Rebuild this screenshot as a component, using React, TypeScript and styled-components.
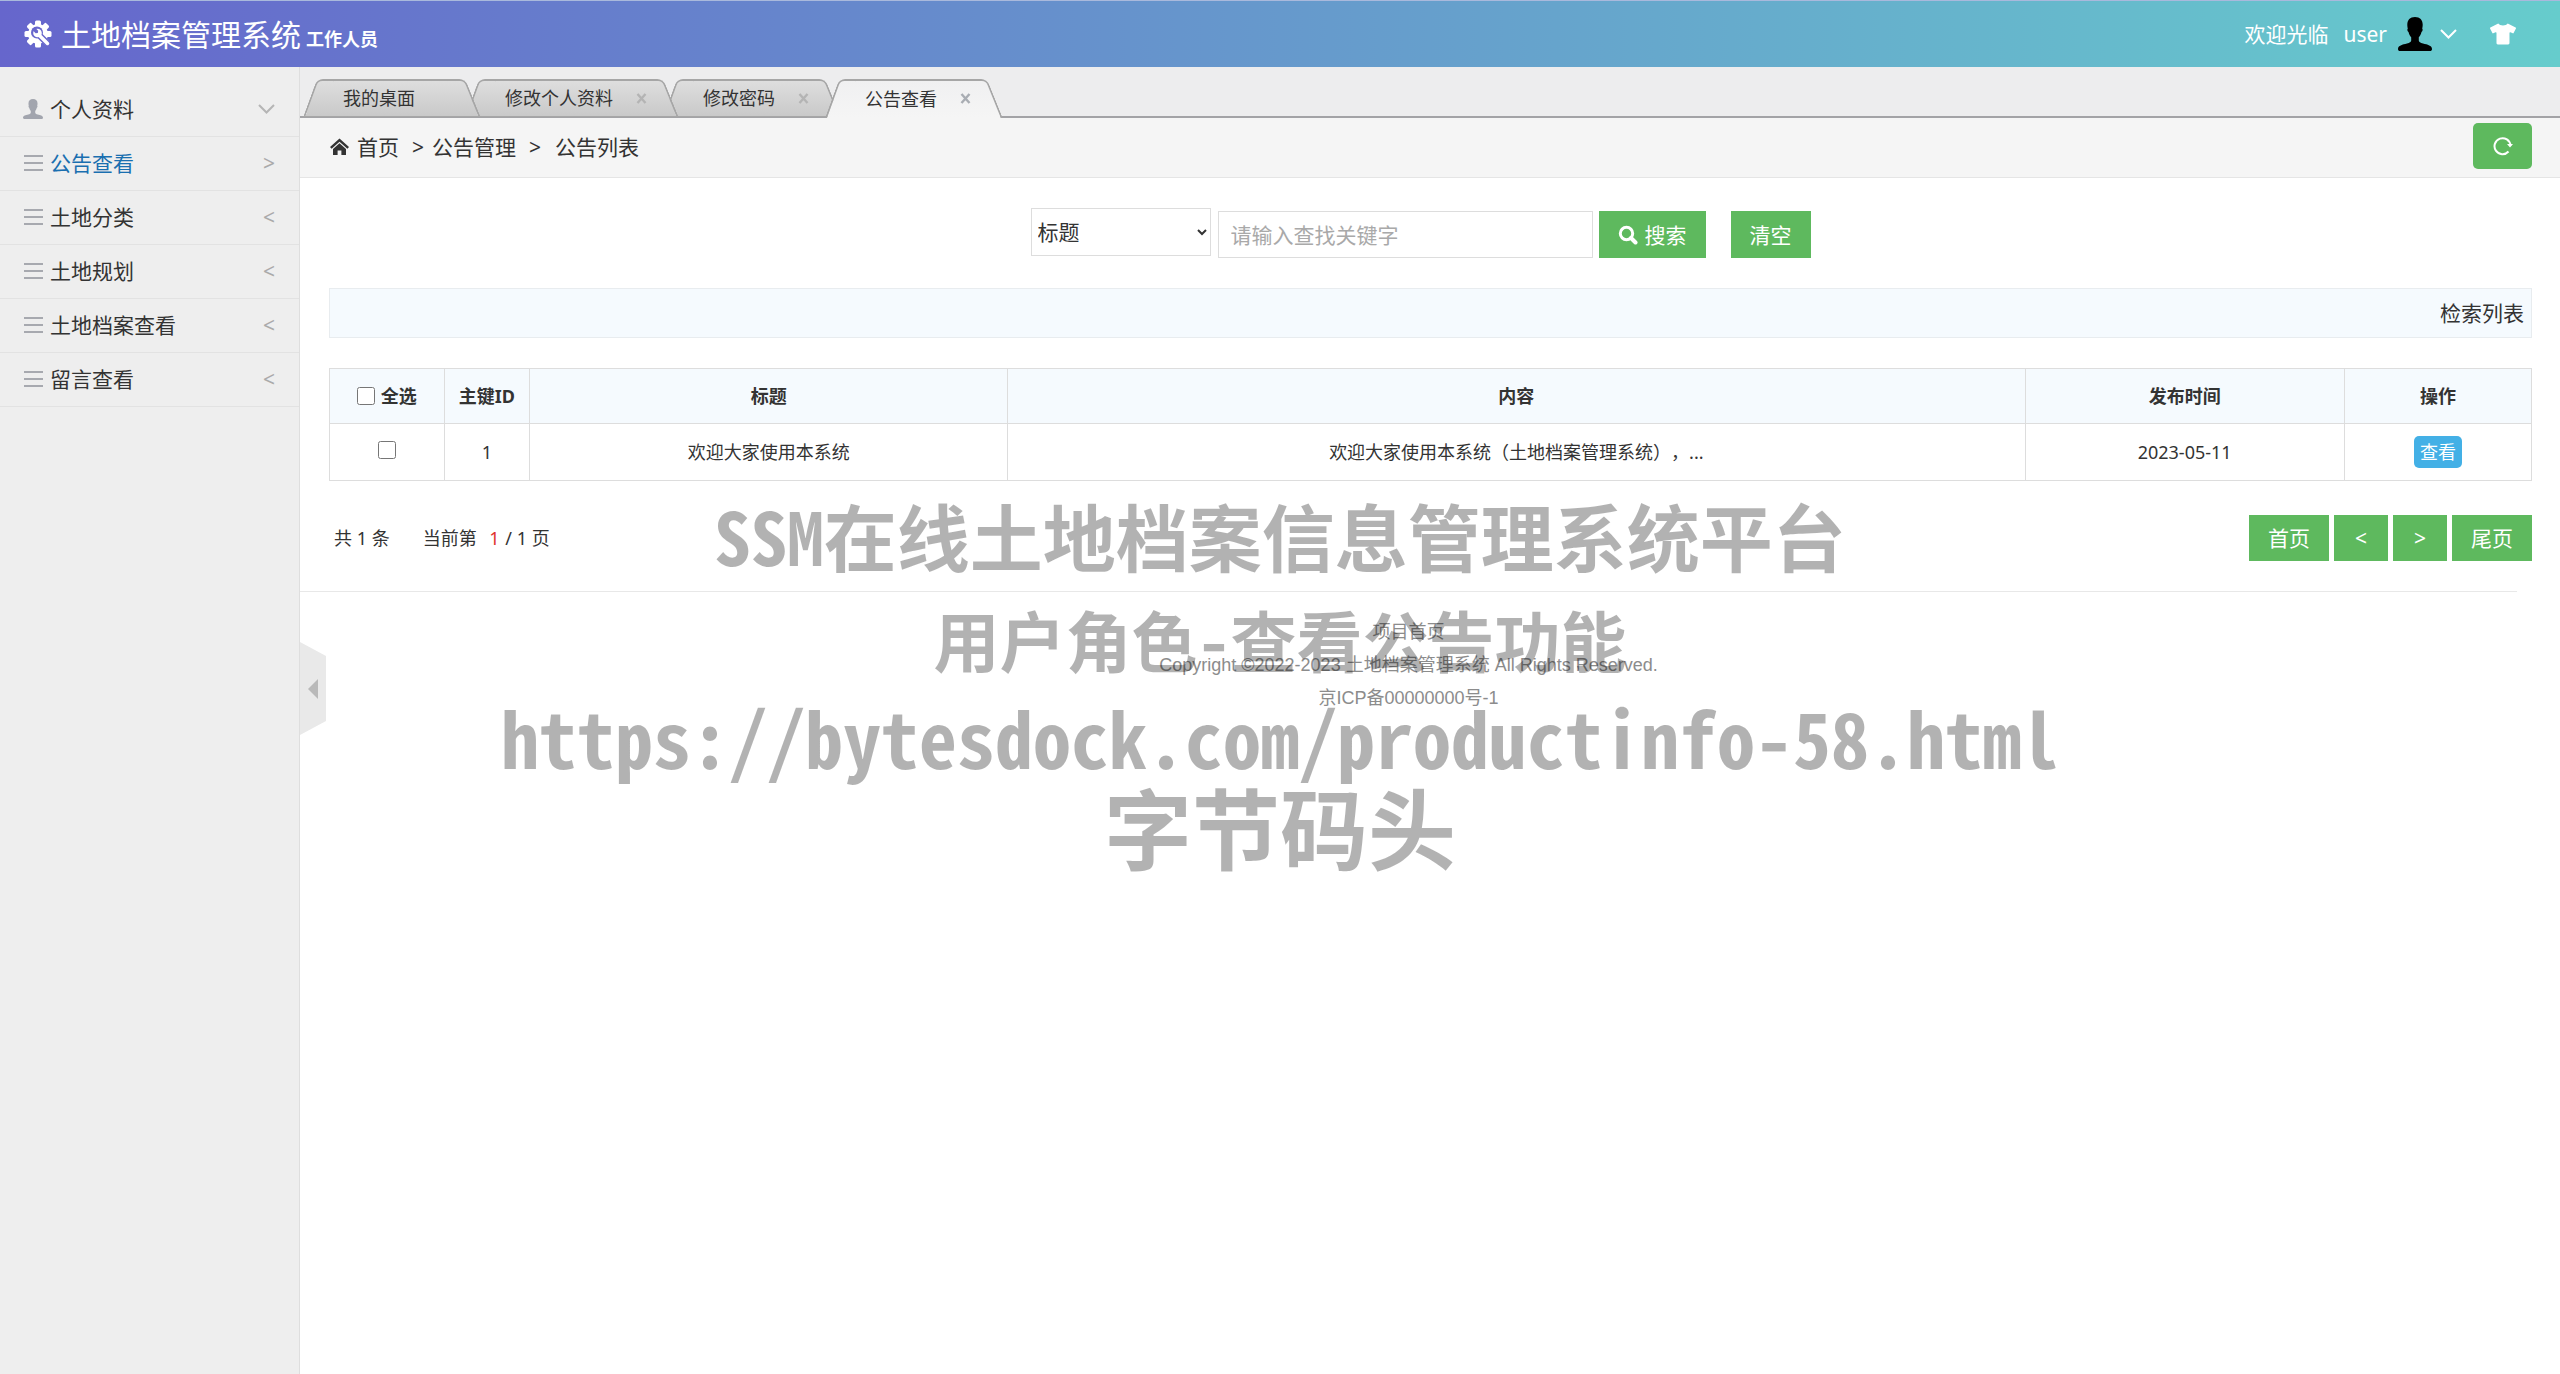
import React, { useState } from "react";
import styled, { createGlobalStyle } from "styled-components";
import { FaTshirt } from "react-icons/fa";

const GREEN = "#5eb95e";
const LINE = "#dddddd";

const GlobalStyle = createGlobalStyle`
  *, *::before, *::after { box-sizing: border-box; }
  body {
    margin: 0;
    background: #fff;
    color: #333;
    font-family: "Noto Sans", "Noto Sans CJK SC", sans-serif;
    font-size: 21px;
    line-height: 30px;
    text-spacing-trim: space-all;
  }
  a { color: inherit; text-decoration: none; }
  button, input, select { font: inherit; color: inherit; }
  button { border: 0; padding: 0; background: none; cursor: pointer; }
  svg { display: block; flex: none; }
`;

const Page = styled.div`
  position: relative;
  min-height: 100vh;
  display: flex;
  flex-direction: column;
`;

/* header */

const Header = styled.header`
  height: 67px;
  padding: 0 44px 0 24px;
  display: flex;
  align-items: center;
  justify-content: space-between;
  color: #fff;
  border-top: 1px solid #a9b9dc;
  background: linear-gradient(to right, #6666cc, #66cccc);
`;

const Brand = styled.a`
  display: flex;
  align-items: center;
  gap: 9px;
`;

const BrandText = styled.span`
  padding-top: 6px;
  display: flex;
  align-items: baseline;
  gap: 5px;
  font-size: 30px;
  line-height: 44px;
`;

const Role = styled.strong`
  font-size: 18px;
`;

const Account = styled.div`
  display: flex;
  align-items: center;
  gap: 33px;
`;

const UserButton = styled.button`
  display: flex;
  align-items: center;
  gap: 8px;
`;

const UserName = styled.span`
  margin: 0 3px 0 7px;
`;

/* body frame */

const Body = styled.div`
  flex: 1;
  display: flex;
`;

const Sidebar = styled.nav`
  width: 300px;
  flex: none;
  padding-top: 16px;
  background: #eeeeee;
  border-right: 1px solid #dedede;
`;

const Menu = styled.ul`
  margin: 0;
  padding: 0;
  list-style: none;
`;

const MenuLink = styled.a<{ $active?: boolean }>`
  height: 54px;
  padding: 0 24px 2px 23px;
  display: flex;
  align-items: center;
  gap: 7px;
  border-bottom: 1px solid #e2e2e2;
  color: ${(p) => (p.$active ? "#1a6fb0" : "#333")};
`;

const MenuMark = styled.span`
  margin-left: auto;
  color: #aaa;
`;

const Content = styled.div`
  position: relative;
  flex: 1;
  min-width: 0;
`;

const Handle = styled.button`
  position: absolute;
  left: 0;
  top: 575px;
  width: 26px;
  height: 93px;
  display: flex;
  align-items: center;
  justify-content: center;
  background: #e9e9e9;
  clip-path: polygon(0 0, 100% 14px, 100% 79px, 0 100%);
`;

/* tabs */

const TabBar = styled.div`
  height: 51px;
  padding: 12px 0 0 10px;
  display: flex;
  background: #ededee;
  border-bottom: 2px solid #a3a3a6;
`;

const Tab = styled.div<{ $active?: boolean; $layer: number }>`
  position: relative;
  z-index: ${(p) => p.$layer};
  height: ${(p) => (p.$active ? 39 : 38)}px;
  padding: 0 23px 0 33px;
  display: flex;
  align-items: center;
  gap: 23px;
  font-size: 18px;

  &::before,
  &::after {
    content: "";
    position: absolute;
    z-index: -1;
    top: 0;
    bottom: 0;
    border: 2px solid #a6a6a6;
    border-bottom-width: ${(p) => (p.$active ? 0 : 1)}px;
    background: ${(p) =>
      p.$active
        ? "linear-gradient(#f0f0f1, #f5f5f5)"
        : "linear-gradient(#dedede, #c9c9c9)"};
  }
  &::before {
    left: 0;
    right: 30px;
    border-right: 0;
    border-top-left-radius: 6px;
    transform: skewX(-20deg);
  }
  &::after {
    right: -1px;
    left: 30px;
    border-left: 0;
    border-top-right-radius: 6px;
    transform: skewX(22deg);
  }
`;

const TabClose = styled.button<{ $hidden?: boolean; $active?: boolean }>`
  width: 11px;
  color: ${(p) => (p.$active ? "#a9adb3" : "#b4b4b4")};
  visibility: ${(p) => (p.$hidden ? "hidden" : "visible")};
`;

/* breadcrumb */

const Crumbs = styled.div`
  height: 60px;
  padding: 0 28px 2px;
  display: flex;
  align-items: center;
  justify-content: space-between;
  background: #f5f5f5;
  border-bottom: 1px solid #e5e5e5;
`;

const CrumbPath = styled.nav`
  display: flex;
  align-items: center;
  gap: 8px;
  padding-left: 2px;
`;

const CrumbArrow = styled.span<{ $wide?: boolean }>`
  margin-left: 5px;
  margin-right: ${(p) => (p.$wide ? 6 : 0)}px;
`;

const Refresh = styled.button`
  width: 59px;
  height: 46px;
  margin-bottom: 2px;
  display: grid;
  place-items: center;
  border-radius: 5px;
  background: ${GREEN};
`;

/* search and list */

const Main = styled.main`
  padding: 30px 28px 30px 29px;
`;

const SearchForm = styled.form`
  display: flex;
  justify-content: center;
  align-items: flex-end;
  padding-right: 20px;
  margin-bottom: 30px;
`;

const Field = styled.select`
  width: 180px;
  height: 48px;
  margin: 0 7px 2px 0;
  padding: 0 2px;
  border: 1px solid ${LINE};
  background: #fff;
`;

const Keyword = styled.input`
  width: 375px;
  height: 47px;
  margin-right: 6px;
  padding: 0 12px;
  border: 1px solid ${LINE};
  &::placeholder { color: #a9a9a9; opacity: 1; }
`;

const GreenButton = styled.button`
  height: 47px;
  padding: 0 19px;
  display: flex;
  align-items: center;
  gap: 7px;
  background: ${GREEN};
  color: #fff;
`;

const ClearButton = styled(GreenButton)`
  margin-left: 25px;
`;

const ListBar = styled.div`
  height: 50px;
  margin-bottom: 30px;
  padding: 0 7px;
  display: flex;
  align-items: center;
  justify-content: flex-end;
  background: #f5fafe;
  border: 1px solid #e8ecef;
`;

const Table = styled.table`
  width: 100%;
  table-layout: fixed;
  border-collapse: collapse;
  font-size: 18px;
  line-height: 30px;
  text-align: center;
  background: #fff;
`;

const Col = styled.col<{ $share: number }>`
  width: ${(p) => p.$share}%;
`;

const Th = styled.th`
  height: 55px;
  padding: 0;
  border: 1px solid ${LINE};
  background: #f5fafe;
`;

const Td = styled.td`
  height: 57px;
  padding: 0;
  border: 1px solid ${LINE};
`;

const Check = styled.input`
  width: 18px;
  height: 18px;
  margin: 0;
`;

const CheckLabel = styled.label`
  display: flex;
  align-items: center;
  justify-content: center;
  gap: 6px;
`;

const ViewButton = styled.button`
  height: 32px;
  padding: 0 6px;
  border-radius: 5px;
  background: #43b0e6;
  color: #fff;
`;

const Pager = styled.div`
  margin-top: 34px;
  display: flex;
  align-items: center;
  justify-content: space-between;
  font-size: 18px;
`;

const PagerInfo = styled.p`
  margin: 0;
  padding-left: 5px;
  display: flex;
  gap: 33px;
`;

const Current = styled.em`
  margin: 0 1px 0 8px;
  font-style: normal;
  color: #e0332e;
`;

const PagerButtons = styled.div`
  display: flex;
  gap: 5px;
  font-size: 21px;
`;

const PagerButton = styled(GreenButton)<{ $narrow?: boolean }>`
  height: 46px;
  padding: 0;
  width: ${(p) => (p.$narrow ? 54 : 80)}px;
  justify-content: center;
`;

const Footer = styled.footer`
  margin-right: 43px;
  padding-top: 24px;
  border-top: 1px solid #e8e8e8;
  text-align: center;
  font-family: "Liberation Sans", "Noto Sans CJK SC", sans-serif;
  font-size: 18px;
  line-height: 33px;
  color: #8c8c8c;
`;

const FooterLine = styled.p`
  margin: 0;
`;

/* watermark laid over the page */

const Watermark = styled.div`
  position: absolute;
  top: 480px;
  left: 0;
  right: 0;
  pointer-events: none;
  text-align: center;
  white-space: nowrap;
  font-family: "Noto Sans CJK SC", sans-serif;
  font-feature-settings: "hwid";
  font-weight: 700;
  color: rgba(0, 0, 0, 0.3);
`;

const MarkLine = styled.div<{ $size: number; $height: number }>`
  font-size: ${(p) => p.$size}px;
  line-height: ${(p) => p.$height}px;
`;

/* icons */

const GearIcon = () => (
  <svg width="28" height="28" viewBox="0 0 28 28" fill="none">
    {[0, 45, 90, 135, 180, 225, 270, 315].map((a) => (
      <rect key={a} x="11" y="0.5" width="6" height="7" rx="1.5" fill="#fff" transform={`rotate(${a} 14 14)`} />
    ))}
    <circle cx="14" cy="14" r="10" fill="#fff" />
    <circle cx="13" cy="12.5" r="6" fill="#6867cc" />
    <path d="M14 14l9 9" stroke="#6867cc" strokeWidth="6.5" strokeLinecap="round" />
    <circle cx="13.5" cy="13" r="4.3" fill="#fff" />
    <path d="M14 14l9.500 9.500" stroke="#fff" strokeWidth="3.500" strokeLinecap="round" />
    <path d="M8 9.500l2.500-2.500 3.700 3.700-.4 2.200-2.200.4z" fill="#6867cc" />
  </svg>
);

const BustIcon = ({ size, color }: { size: number; color: string }) => (
  <svg width={size} height={size} viewBox="0 0 34 34" fill={color}>
    <path d="M17 0c5 0 7.700 3 7.700 7.500 0 1.800-.2 3-.5 4 .8.600.5 2.700-.7 3.500-.5 2.300-1.500 4-2.700 5.200v3.300c0 1.500 1.700 2.300 4.200 3 4.500 1.200 9 2 9 5.500 0 1.500-.8 2-2 2H2c-1.200 0-2-.5-2-2 0-3.500 4.500-4.300 9-5.500 2.500-.7 4.200-1.500 4.200-3v-3.300c-1.200-1.200-2.200-2.900-2.700-5.200-1.200-.8-1.500-2.900-.7-3.500-.3-1-.5-2.200-.5-4C9.300 3 12 0 17 0z" />
  </svg>
);

const ChevronIcon = ({ color }: { color: string }) => (
  <svg width="17" height="10" viewBox="0 0 17 10" fill="none" stroke={color} strokeWidth="2">
    <path d="M1 1l7.500 7.500L16 1" />
  </svg>
);

const LinesIcon = () => (
  <svg width="20" height="20" viewBox="0 0 20 20" stroke="#a7a9af" strokeWidth="2">
    <path d="M1 3h19M1 10h19M1 17h19" />
  </svg>
);

const HomeIcon = () => (
  <svg width="19" height="18" viewBox="0 0 19 18" fill="#333">
    <path d="M9.500 0.500L19 9l-1.600 1.700L9.500 3.700l-7.900 7L0 9z" />
    <path d="M9.500 5.200l6.500 5.700V17h-4.600v-4.500H7.600V17H3v-6.100z" />
  </svg>
);

const CloseIcon = () => (
  <svg width="11" height="11" viewBox="0 0 11 11" stroke="currentColor" strokeWidth="2.400">
    <path d="M1.500 1l8 9M9.500 1l-8 9" />
  </svg>
);

const SearchIcon = () => (
  <svg width="20" height="20" viewBox="0 0 20 20" fill="none" stroke="#fff" strokeWidth="3">
    <circle cx="8.500" cy="8.500" r="6.200" />
    <path d="M13 13l4.500 4.500" strokeWidth="4" strokeLinecap="round" />
  </svg>
);

const RefreshIcon = () => (
  <svg width="20" height="20" viewBox="0 0 20 20" fill="none" stroke="#fff" strokeWidth="2">
    <path d="M15.500 15.500A8 8 0 1 1 17.500 9.500" />
    <path d="M14 8h6l-3 3.500z" fill="#fff" stroke="none" />
  </svg>
);

const TriangleIcon = () => (
  <svg width="10" height="20" viewBox="0 0 10 20" fill="#b9b9b9">
    <path d="M10 0v20L0 10z" />
  </svg>
);

/* data */

const menu = [
  { label: "公告查看", mark: ">", active: true },
  { label: "土地分类", mark: "<" },
  { label: "土地规划", mark: "<" },
  { label: "土地档案查看", mark: "<" },
  { label: "留言查看", mark: "<" },
];

const tabs = ["我的桌面", "修改个人资料", "修改密码", "公告查看"];

const columns = [5.2, 3.9, 21.7, 46.2, 14.5, 8.5];

const rows = [
  { id: 1, title: "欢迎大家使用本系统", body: "欢迎大家使用本系统（土地档案管理系统），...", date: "2023-05-11" },
];

export default function App() {
  const [active, setActive] = useState(3);
  const [picked, setPicked] = useState<number[]>([]);
  const all = picked.length === rows.length;

  return (
    <Page>
      <GlobalStyle />
      <Header>
        <Brand href="#">
          <GearIcon />
          <BrandText>
            土地档案管理系统<Role>工作人员</Role>
          </BrandText>
        </Brand>
        <Account>
          <UserButton type="button">
            欢迎光临
            <UserName>user</UserName>
            <BustIcon size={34} color="#000" />
            <ChevronIcon color="#fff" />
          </UserButton>
          <button type="button" aria-label="换肤">
            <FaTshirt size={26} color="#fff" />
          </button>
        </Account>
      </Header>

      <Body>
        <Sidebar>
          <Menu>
            <li>
              <MenuLink href="#">
                <BustIcon size={20} color="#a2a5ae" />
                个人资料
                <MenuMark><ChevronIcon color="#b5b5b5" /></MenuMark>
              </MenuLink>
            </li>
            {menu.map((m) => (
              <li key={m.label}>
                <MenuLink href="#" $active={m.active}>
                  <LinesIcon />
                  {m.label}
                  <MenuMark>{m.mark}</MenuMark>
                </MenuLink>
              </li>
            ))}
          </Menu>
        </Sidebar>

        <Content>
          <TabBar>
            {tabs.map((t, i) => (
              <Tab key={t} $active={i === active} $layer={i === active ? 10 : tabs.length - i}>
                <a href="#" onClick={() => setActive(i)}>{t}</a>
                <TabClose type="button" aria-label="关闭" $hidden={i === 0} $active={i === active}>
                  <CloseIcon />
                </TabClose>
              </Tab>
            ))}
          </TabBar>

          <Crumbs>
            <CrumbPath>
              <HomeIcon />
              <a href="#">首页</a>
              <CrumbArrow>&gt;</CrumbArrow>
              <span>公告管理</span>
              <CrumbArrow $wide>&gt;</CrumbArrow>
              <span>公告列表</span>
            </CrumbPath>
            <Refresh type="button" aria-label="刷新">
              <RefreshIcon />
            </Refresh>
          </Crumbs>

          <Main>
            <SearchForm onSubmit={(e) => e.preventDefault()}>
              <Field aria-label="查找字段">
                <option>标题</option>
              </Field>
              <Keyword type="text" aria-label="关键字" placeholder="请输入查找关键字" />
              <GreenButton type="submit">
                <SearchIcon />
                搜索
              </GreenButton>
              <ClearButton type="reset">清空</ClearButton>
            </SearchForm>

            <ListBar>检索列表</ListBar>

            <Table>
              <colgroup>
                {columns.map((c) => <Col key={c} $share={c} />)}
              </colgroup>
              <thead>
                <tr>
                  <Th>
                    <CheckLabel>
                      <Check
                        type="checkbox"
                        checked={all}
                        onChange={() => setPicked(all ? [] : rows.map((r) => r.id))}
                      />
                      全选
                    </CheckLabel>
                  </Th>
                  <Th>主键ID</Th>
                  <Th>标题</Th>
                  <Th>内容</Th>
                  <Th>发布时间</Th>
                  <Th>操作</Th>
                </tr>
              </thead>
              <tbody>
                {rows.map((r) => (
                  <tr key={r.id}>
                    <Td>
                      <Check
                        type="checkbox"
                        aria-label={r.title}
                        checked={picked.includes(r.id)}
                        onChange={() =>
                          setPicked(picked.includes(r.id) ? picked.filter((p) => p !== r.id) : [...picked, r.id])
                        }
                      />
                    </Td>
                    <Td>{r.id}</Td>
                    <Td>{r.title}</Td>
                    <Td>{r.body}</Td>
                    <Td>{r.date}</Td>
                    <Td><ViewButton type="button">查看</ViewButton></Td>
                  </tr>
                ))}
              </tbody>
            </Table>

            <Pager>
              <PagerInfo>
                <span>共 1 条</span>
                <span>当前第 <Current>1</Current> / 1 页</span>
              </PagerInfo>
              <PagerButtons>
                <PagerButton type="button">首页</PagerButton>
                <PagerButton type="button" $narrow>&lt;</PagerButton>
                <PagerButton type="button" $narrow>&gt;</PagerButton>
                <PagerButton type="button">尾页</PagerButton>
              </PagerButtons>
            </Pager>
          </Main>

          <Footer>
            <FooterLine><a href="#">项目首页</a></FooterLine>
            <FooterLine>Copyright ©2022-2023 土地档案管理系统 All Rights Reserved.</FooterLine>
            <FooterLine>京ICP备00000000号-1</FooterLine>
          </Footer>

          <Handle type="button" aria-label="收起菜单">
            <TriangleIcon />
          </Handle>
        </Content>
      </Body>

      <Watermark>
        <MarkLine $size={73} $height={108}>SSM在线土地档案信息管理系统平台</MarkLine>
        <MarkLine $size={66} $height={100}>用户角色-查看公告功能</MarkLine>
        <MarkLine $size={76} $height={96}>https://bytesdock.com/productinfo-58.html</MarkLine>
        <MarkLine $size={88} $height={82}>字节码头</MarkLine>
      </Watermark>
    </Page>
  );
}
